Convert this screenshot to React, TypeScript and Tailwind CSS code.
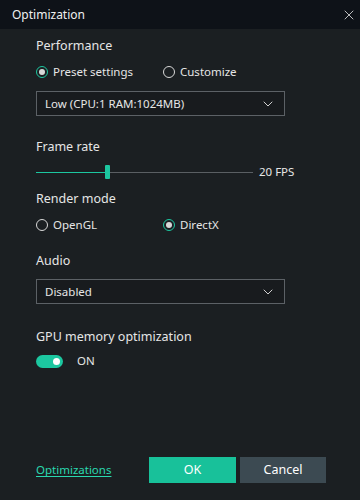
import { X, ChevronDown } from "lucide-react";

const Radio = ({ label, checked }: { label: string; checked?: boolean }) => {
  return (
    <div className="flex items-center w-[127px]">
      <span
        className={
          "flex items-center justify-center w-[12px] h-[12px] rounded-full border-[1.5px] " +
          (checked ? "border-[#1cc7a0]" : "border-[#d8d8d8]")
        }>
        {checked && <span className="w-[6px] h-[6px] rounded-full bg-[#d8d8d8]" />}
      </span>
      <span className="ml-[5px]">{label}</span>
    </div>
  );
};

const Select = ({ value }: { value: string }) => {
  return (
    <div className="flex items-center justify-between w-[249px] h-[25px] border border-[#5c6166] bg-[#181b1e] pl-[8px] pr-[8px] text-[11.5px]">
      <span>{value}</span>
      <ChevronDown size={16} strokeWidth={1.5} className="text-[#d0d0d0]" />
    </div>
  );
};

export default function App() {
  return (
    <div
      className="w-[360px] h-[500px] bg-[#1b1f22] text-[#e6e6e6] flex flex-col text-[12.5px]"
      style={{ fontFamily: '"Noto Sans", "Open Sans", sans-serif' }}>
      <div className="h-[29px] bg-[#0e1218] flex items-center justify-between pl-[12px] pr-[3px]">
        <span className="text-[12px] text-[#f0f0f0]">Optimization</span>
        <X size={16} strokeWidth={1.25} className="text-[#e0e0e0]" />
      </div>

      <div className="flex flex-col pl-[36px] pt-[7px]">
        <div className="h-[20px] leading-[20px]">Performance</div>
        <div className="flex mt-[6px] h-[20px] items-center text-[11.5px]">
          <Radio label="Preset settings" checked />
          <Radio label="Customize" />
        </div>
        <div className="mt-[9px]">
          <Select value="Low (CPU:1 RAM:1024MB)" />
        </div>

        <div className="mt-[21px] h-[20px] leading-[20px]">Frame rate</div>
        <div className="flex items-center mt-[7px] h-[16px]">
          <div className="relative w-[217px] h-[1px] bg-[#5a5f63]">
            <div className="absolute left-0 top-0 h-[1px] w-[71px] bg-[#1cc7a0]" />
            <div className="absolute left-[69px] top-[-7px] w-[5px] h-[14px] rounded-[1px] bg-[#1cc7a0]" />
          </div>
          <span className="ml-[6px] text-[11.5px]">20 FPS</span>
        </div>
        <div className="mt-[9px] h-[20px] leading-[20px]">Render mode</div>
        <div className="flex mt-[6px] h-[20px] items-center text-[11.5px]">
          <Radio label="OpenGL" />
          <Radio label="DirectX" checked />
        </div>

        <div className="mt-[16px] h-[20px] leading-[20px]">Audio</div>
        <div className="mt-[8px]">
          <Select value="Disabled" />
        </div>

        <div className="mt-[23px] h-[20px] leading-[20px]">GPU memory optimization</div>
        <div className="flex items-center mt-[5px] h-[18px]">
          <div className="flex items-center justify-end w-[27px] h-[13px] rounded-full bg-[#1cc7a0] pr-[3px]">
            <span className="w-[7px] h-[7px] rounded-full bg-white" />
          </div>
          <span className="ml-[14px] text-[11.5px]">ON</span>
        </div>
      </div>

      <div className="mt-auto flex items-center pl-[36px] pb-[17px]">
        <span className="text-[11.5px] text-[#2ad8b0] underline underline-offset-2 w-[113px]">Optimizations</span>
        <button className="w-[87px] h-[26px] bg-[#18c19a] text-white text-[12.5px]">OK</button>
        <button className="ml-[4px] w-[86px] h-[26px] bg-[#3c4a52] text-white text-[12.5px]">Cancel</button>
      </div>
    </div>
  );
}
